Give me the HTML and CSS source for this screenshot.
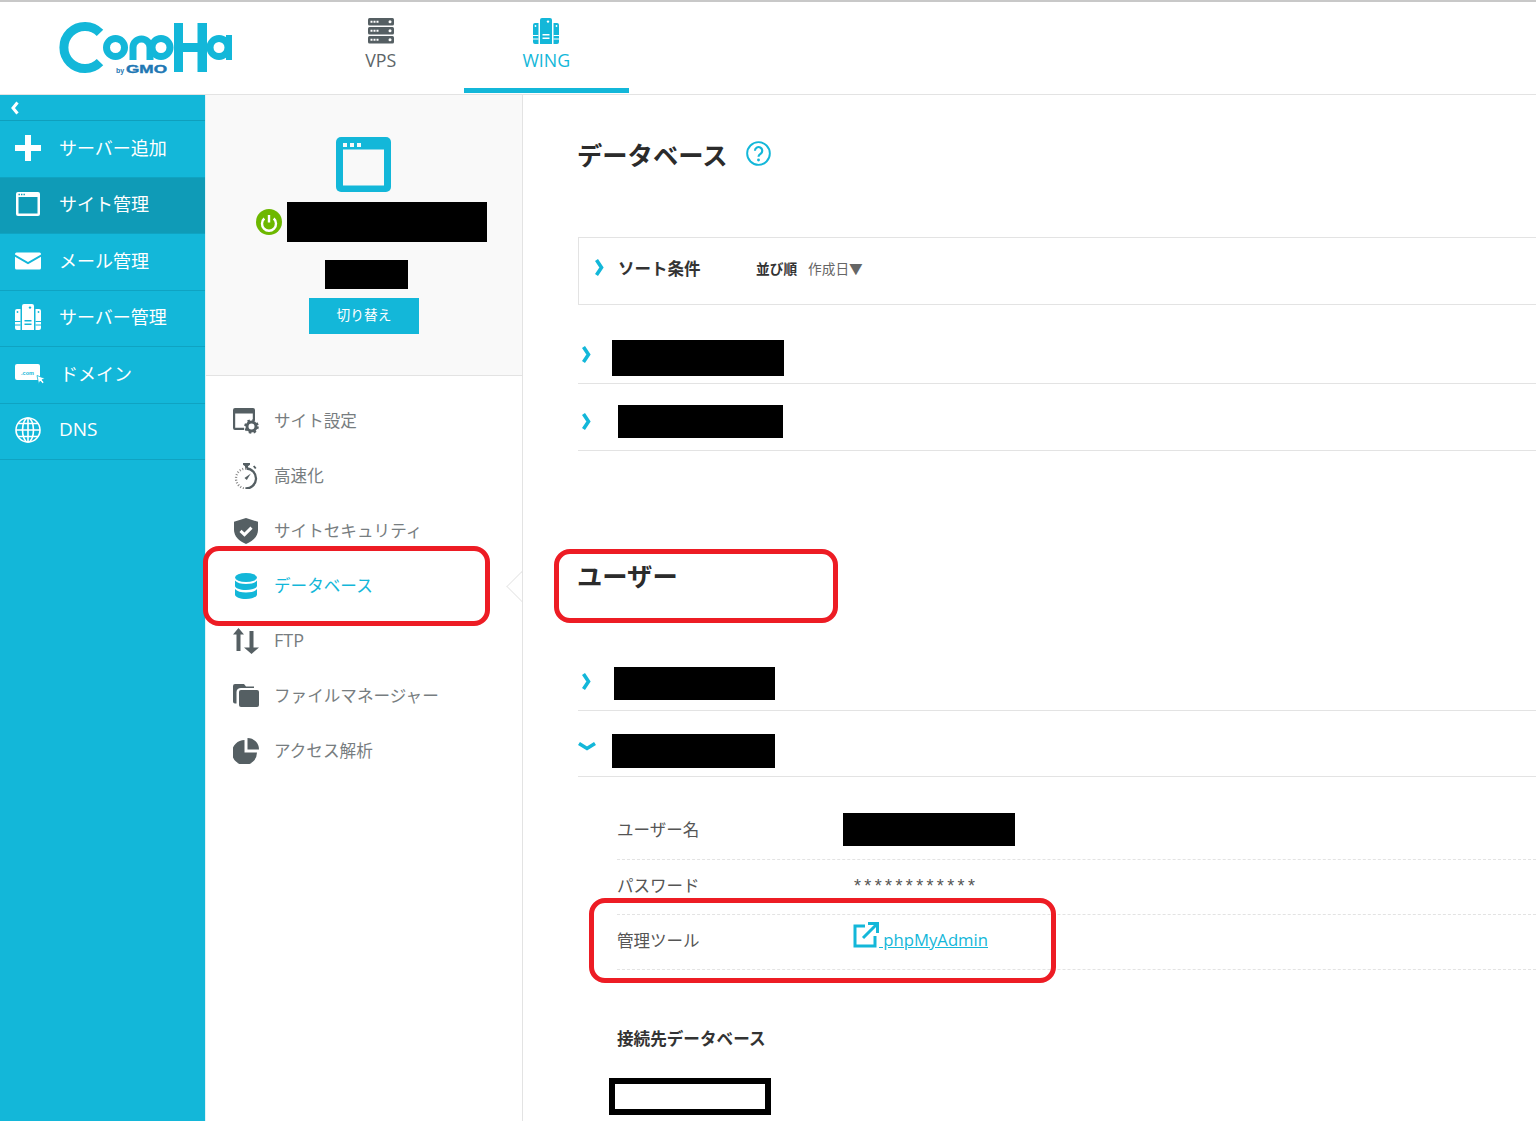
FILE: index.html
```html
<!DOCTYPE html>
<html lang="ja">
<head>
<meta charset="utf-8">
<title>ConoHa WING データベース</title>
<link rel="stylesheet" href="styles.css">
</head>
<body>
<svg class="defs" width="0" height="0" aria-hidden="true">
  <symbol id="i-server" viewBox="0 0 26 26">
    <path fill="currentColor" d="M7 2a2 2 0 0 1 2-2h8a2 2 0 0 1 2 2v24H7zM0 7a2 2 0 0 1 2-2h3.500v21H2a2 2 0 0 1-2-2zM20.500 5H24a2 2 0 0 1 2 2v17a2 2 0 0 1-2 2h-3.500z"/>
    <path class="knock" d="M9.500 16h7v1.500h-7zM9.500 19.500h7V21h-7zM0 17h5.500v1H0zM0 20.500h5.500v1H0zM20.500 17H26v1h-5.500zM20.500 20.500H26v1h-5.500z"/>
    <circle class="knock" cx="15" cy="3.600" r="1.200"/><circle class="knock" cx="23.500" cy="8" r=".9"/><circle class="knock" cx="2.500" cy="8" r=".9"/>
  </symbol>
  <symbol id="i-window" viewBox="0 0 55 55">
    <rect width="55" height="55" rx="5" fill="currentColor"/>
    <rect class="knock" x="7" y="12.500" width="41" height="36"/>
    <rect class="knock" x="7" y="6" width="4" height="4"/><rect class="knock" x="14" y="6" width="4" height="4"/><rect class="knock" x="21" y="6" width="4" height="4"/>
  </symbol>
  <symbol id="i-chev" viewBox="0 0 10 17">
    <path d="M2.500 1l5 7.500-5 7.500" fill="none" stroke="#13b7d9" stroke-width="3.600"/>
  </symbol>
</svg>

<div class="page">
  <header class="topbar">
    <svg class="logo" viewBox="0 0 195 75" role="img" aria-label="ConoHa by GMO">
      <g fill="none" stroke="#13b7d9">
        <path stroke-width="9" d="M50 22.900A21 21 0 1 0 50 52.100"/>
        <circle cx="65.500" cy="37.500" r="9" stroke-width="7"/>
        <path stroke-width="7" d="M83 50V37.500a8.500 8.500 0 0 1 17 0V50"/>
        <circle cx="111" cy="37.500" r="9" stroke-width="7"/>
        <circle cx="169" cy="37.500" r="9" stroke-width="7"/>
      </g>
      <path fill="#13b7d9" d="M124 13h9v20h14.500V13h9.500v49h-9.500V42H133v20h-9zM176 25h6v25h-6z"/>
      <text class="logo-by" x="66" y="63">by</text>
      <text class="logo-gmo" x="76" y="63" textLength="41" lengthAdjust="spacingAndGlyphs">GMO</text>
    </svg>
    <nav class="tabs">
      <a class="tab">
        <svg class="tab-icon" viewBox="0 0 26 26">
          <g fill="currentColor"><rect y="0" width="26" height="7.500" rx="1.500"/><rect y="9" width="26" height="7.500" rx="1.500"/><rect y="18" width="26" height="7.500" rx="1.500"/></g>
          <g class="knock">
            <path d="M2.500 2.700h2v2h-2zM5.500 2.700h2v2h-2zM8.500 2.700h2v2h-2zM2.500 11.700h2v2h-2zM5.500 11.700h2v2h-2zM8.500 11.700h2v2h-2zM2.500 20.700h2v2h-2zM5.500 20.700h2v2h-2zM8.500 20.700h2v2h-2z"/>
            <circle cx="22" cy="3.700" r="1.500"/><circle cx="22" cy="12.700" r="1.500"/><circle cx="22" cy="21.700" r="1.500"/>
          </g>
        </svg>
        <span>VPS</span>
      </a>
      <a class="tab tab-active">
        <svg class="tab-icon"><use href="#i-server"/></svg>
        <span>WING</span>
      </a>
    </nav>
  </header>

  <div class="body">
    <aside class="sidebar">
      <div class="collapse"><svg width="10" height="14" viewBox="0 0 10 14"><path d="M7.500 1.500 3 7l4.500 5.500" fill="none" stroke="#fff" stroke-width="3"/></svg></div>
      <a class="side-item">
        <svg class="side-icon" viewBox="0 0 26 26"><path fill="#fff" d="M10 0h6v10h10v6H16v10h-6V16H0v-6h10z"/></svg>
        <span>サーバー追加</span>
      </a>
      <a class="side-item side-active">
        <svg class="side-icon" viewBox="0 0 26 26"><rect x="1" y="1" width="24" height="24" rx="2" fill="#fff"/><rect x="3.500" y="6" width="19" height="16.500" fill="#0f9bb7"/><path fill="#0f9bb7" d="M3.500 2.800h1.400v1.400H3.500zM6 2.800h1.400v1.400H6zM8.500 2.800h1.400v1.400H8.500z"/></svg>
        <span>サイト管理</span>
      </a>
      <a class="side-item">
        <svg class="side-icon" viewBox="0 0 26 26"><path fill="#fff" d="M1.500 4.500h23A1.500 1.500 0 0 1 26 6v.4L13 14 0 6.400V6a1.500 1.500 0 0 1 1.500-1.500zM0 8.700l13 7.600 13-7.600V20a1.500 1.500 0 0 1-1.500 1.500h-23A1.500 1.500 0 0 1 0 20z"/></svg>
        <span>メール管理</span>
      </a>
      <a class="side-item side-cyan">
        <svg class="side-icon"><use href="#i-server"/></svg>
        <span>サーバー管理</span>
      </a>
      <a class="side-item">
        <svg class="side-icon side-icon-wide" viewBox="0 0 30 20">
          <rect y="0" width="25" height="16" rx="2" fill="#fff"/>
          <text class="dotcom" x="12.500" y="10.500">.com</text>
          <path fill="#fff" stroke="#13b7d9" stroke-width=".8" d="M22 11.500l8 3-3 1.300 2.200 2.500-1.700 1.300-2.200-2.500-1.700 2.600z"/>
        </svg>
        <span>ドメイン</span>
      </a>
      <a class="side-item">
        <svg class="side-icon" viewBox="0 0 26 26"><g fill="none" stroke="#fff" stroke-width="1.600"><circle cx="13" cy="13" r="12"/><ellipse cx="13" cy="13" rx="5.500" ry="12"/><path d="M13 1v24M1 13h24M3 6.500h20M3 19.500h20"/></g></svg>
        <span class="latin-side">DNS</span>
      </a>
    </aside>

    <section class="subnav">
      <div class="site-card">
        <svg class="site-icon"><use href="#i-window"/></svg>
        <div class="site-name">
          <svg class="power" viewBox="0 0 26 26"><circle cx="13" cy="13" r="13" fill="#6db800"/><path d="M8.300 9.500a7 7 0 1 0 9.400 0" fill="none" stroke="#fff" stroke-width="2.400"/><path d="M13 6v7.500" stroke="#fff" stroke-width="2.400"/></svg>
          <div class="mask mask-name"></div>
        </div>
        <div class="mask mask-plan"></div>
        <button class="switch">切り替え</button>
      </div>
      <ul class="menu">
        <li class="menu-item">
          <svg class="menu-icon" viewBox="0 0 26 26">
            <path class="dark-fill" d="M2 0h18a2 2 0 0 1 2 2v10h-2.200V5.500H2.200v14.300H11V22H2a2 2 0 0 1-2-2V2a2 2 0 0 1 2-2z"/>
            <circle class="dark-stroke" cx="18.500" cy="18.500" r="4.500" stroke-width="3" fill="none"/>
            <circle class="dark-stroke" cx="18.500" cy="18.500" r="6.300" stroke-width="2" stroke-dasharray="2.500 2.450" fill="none"/>
          </svg>
          <span>サイト設定</span>
        </li>
        <li class="menu-item">
          <svg class="menu-icon" viewBox="0 0 26 26">
            <path class="dark-fill" d="M10 0h7v1.800l-2 1.400v2h-3v-2l-2-1.400zM20 3.500l1.500-1 2 2.500-1.500 1z"/>
            <path class="dark-stroke" fill="none" stroke-width="2.300" d="M13.500 5.500a10 10 0 1 1-1 20"/>
            <path fill="none" stroke="#888" stroke-width="2.300" stroke-dasharray="1 1.800" d="M13 5.500a10 10 0 0 0 0 20"/>
            <path class="dark-fill" d="M17.800 10.500l-4 6.500-2.300-2z"/>
          </svg>
          <span>高速化</span>
        </li>
        <li class="menu-item">
          <svg class="menu-icon" viewBox="0 0 26 26">
            <path class="dark-fill" d="M13 0l12 3.800v8c0 6.500-5 11.500-12 14.200C6 23.300 1 18.300 1 11.800v-8z"/>
            <path d="M7.500 12.800l4 3.800 7-7" fill="none" stroke="#fff" stroke-width="3"/>
          </svg>
          <span>サイトセキュリティ</span>
        </li>
        <li class="menu-item menu-active">
          <svg class="menu-icon" viewBox="0 0 26 26">
            <ellipse cx="13" cy="4.500" rx="11" ry="4.500" fill="#13b7d9"/>
            <path fill="#13b7d9" d="M2 7.500c2 2.500 6 3.500 11 3.500s9-1 11-3.500v5.300c0 2.500-5 4.200-11 4.200S2 15.300 2 12.800zM2 16c2 2.500 6 3.500 11 3.500s9-1 11-3.500v5.500c0 2.500-5 4.500-11 4.500S2 24 2 21.500z"/>
          </svg>
          <span>データベース</span>
        </li>
        <li class="menu-item">
          <svg class="menu-icon" viewBox="0 0 26 26">
            <path class="dark-fill" d="M5.500 0L11 6.500H7.500V23h-4V6.500H0zM16.500 3h4v16.500H26L18.500 26 11 19.500h5.500z"/>
          </svg>
          <span class="latin-menu">FTP</span>
        </li>
        <li class="menu-item">
          <svg class="menu-icon" viewBox="0 0 26 26">
            <path class="dark-fill" d="M2 1h9l2 2.500h8V5H8C5.500 5 3.500 6.500 3.500 9v11.500H2a2 2 0 0 1-2-2V3a2 2 0 0 1 2-2z"/>
            <path class="dark-fill" d="M8 7h16a2 2 0 0 1 2 2v13a2 2 0 0 1-2 2H8a2 2 0 0 1-2-2V9a2 2 0 0 1 2-2z"/>
          </svg>
          <span>ファイルマネージャー</span>
        </li>
        <li class="menu-item">
          <svg class="menu-icon" viewBox="0 0 26 26">
            <path class="dark-fill" d="M11.500 2v12.500H24A12.500 12.500 0 1 1 11.500 2zM14.500 0A11.500 11.500 0 0 1 26 11.500H14.500z"/>
          </svg>
          <span>アクセス解析</span>
        </li>
      </ul>
    </section>

    <main class="content">
      <div class="heading">
        <h1>データベース</h1>
        <svg class="help" viewBox="0 0 26 26"><circle cx="13" cy="13" r="11.800" fill="none" stroke="#13b7d9" stroke-width="2"/><path d="M9.300 10.200a3.800 3.800 0 1 1 5.900 3.100c-1.400 1-2.200 1.500-2.200 3.200" fill="none" stroke="#13b7d9" stroke-width="2.200"/><circle cx="13" cy="19.700" r="1.500" fill="#13b7d9"/></svg>
      </div>
      <div class="sort">
        <svg class="chev"><use href="#i-chev"/></svg>
        <strong class="sort-title">ソート条件</strong>
        <strong class="sort-label">並び順</strong>
        <span class="sort-value">作成日▼</span>
      </div>

      <div class="row row-first">
        <svg class="chev"><use href="#i-chev"/></svg>
        <div class="mask mask-r1"></div>
      </div>
      <div class="row">
        <svg class="chev"><use href="#i-chev"/></svg>
        <div class="mask mask-r2"></div>
      </div>

      <h2>ユーザー</h2>

      <div class="row">
        <svg class="chev"><use href="#i-chev"/></svg>
        <div class="mask mask-r3"></div>
      </div>
      <div class="row row-open">
        <svg class="chev chev-down" viewBox="0 0 18 10"><path d="M1 1.500l8 5 8-5" fill="none" stroke="#13b7d9" stroke-width="3.600"/></svg>
        <div class="mask mask-r4"></div>
      </div>

      <dl class="detail">
        <div class="detail-row"><dt>ユーザー名</dt><dd class="dd-mask"><div class="mask mask-user"></div></dd></div>
        <div class="detail-row"><dt>パスワード</dt><dd class="stars">************</dd></div>
        <div class="detail-row"><dt>管理ツール</dt><dd>
          <a class="tool-link">
            <svg class="ext" viewBox="0 0 26 26"><path d="M12 4H2v20h20V14" fill="none" stroke="#13b7d9" stroke-width="3"/><path d="M10 16 23 3" stroke="#13b7d9" stroke-width="3"/><path d="M15 1.500h9.500V11" fill="none" stroke="#13b7d9" stroke-width="3"/></svg>
            <span> phpMyAdmin</span>
          </a>
        </dd></div>
      </dl>

      <h3>接続先データベース</h3>
      <div class="outlined"></div>
    </main>
  </div>

  <div class="note note-menu"></div>
  <div class="note note-user"></div>
  <div class="note note-tool"></div>
</div>
</body>
</html>
```

FILE: styles.css
```css
* { box-sizing: border-box; }
html, body { margin: 0; height: 100%; }
body {
  background: #fff;
  color: #333;
  font-family: "Open Sans", "Noto Sans CJK JP", sans-serif;
  overflow: hidden;
}
.defs { position: absolute; }
.knock { fill: var(--knock, #fff); }
.page { position: relative; width: 1536px; height: 1121px; overflow: hidden; }

/* top bar */
.topbar {
  height: 95px;
  display: flex;
  border-top: 2px solid #c8c8c8;
  border-bottom: 1px solid #e3e3e3;
}
.logo { width: 195px; height: 75px; margin: 8px 0 0 50px; flex: none; }
.logo-by { font: 700 7px "Liberation Sans", sans-serif; fill: #1f78b4; }
.logo-gmo { font: 700 11.500px "Liberation Sans", sans-serif; fill: #1f78b4; stroke: #1f78b4; stroke-width: .4px; }
.tabs { display: flex; margin-left: 53px; }
.tab {
  width: 165.500px;
  height: 91px;
  display: flex;
  flex-direction: column;
  align-items: center;
  padding-top: 16px;
  color: #5d6568;
  font-size: 17.800px;
  line-height: 22px;
}
.tab span { margin-top: 5px; }
.tab-icon { width: 26px; height: 26px; display: block; color: #555f63; }
.tab-active { color: #13b7d9; border-bottom: 5px solid #13b7d9; }
.tab-active .tab-icon { color: #13b7d9; }

/* columns */
.body { display: flex; height: 1026px; }
.sidebar { width: 206px; flex: none; background: #13b7d9; border-right: 1px solid #dff3f8; }
.collapse { height: 26px; padding: 6px 0 0 10px; border-bottom: 1px solid #0f9fbd; }
.collapse svg { display: block; }
.side-item {
  height: 56.500px;
  display: flex;
  align-items: center;
  padding: 0 0 2px 15px;
  border-bottom: 1px solid #0fa3c2;
  color: #fff;
  font-size: 18px;
}
.side-item span { margin-bottom: 2px; }
.latin-side { font-size: 19px; letter-spacing: -.1px; }
.side-active { background: #0f9bb7; }
.side-icon { width: 26px; height: 26px; flex: none; margin-right: 18px; }
.side-icon-wide { width: 30px; height: 20px; margin-right: 15px; }
.side-cyan .side-icon { color: #fff; --knock: #13b7d9; }
.dotcom { font: 700 5.500px "Liberation Sans", sans-serif; fill: #13b7d9; text-anchor: middle; }

.subnav { width: 317px; flex: none; border-right: 1px solid #e3e3e3; }
.site-card {
  height: 281px;
  padding-top: 42px;
  display: flex;
  flex-direction: column;
  align-items: center;
  background: #f9f9f9;
  border-bottom: 1px solid #e3e3e3;
}
.site-icon { width: 55px; height: 55px; color: #13b7d9; display: block; margin-left: -2px; --knock: #f9f9f9; }
.site-name { display: flex; align-items: center; gap: 5px; margin: 10px 0 0 14px; }
.power { width: 26px; height: 26px; margin-top: -1px; }
.mask { background: #000; flex: none; }
.mask-name { width: 200px; height: 40px; }
.mask-plan { width: 83px; height: 29px; margin: 18px 0 0 5px; }
.switch {
  width: 110px;
  height: 36px;
  margin-top: 9px;
  padding: 0 0 4px;
  border: 0;
  background: #13b7d9;
  color: #fff;
  font: 400 13.700px "Open Sans", "Noto Sans CJK JP", sans-serif;
}
.menu { position: relative; overflow: hidden; height: 600px; list-style: none; margin: 0; padding: 17px 0 0 27px; }
.menu-item {
  position: relative;
  height: 55px;
  display: flex;
  align-items: center;
  color: #777d80;
  font-size: 16.600px;
}
.menu-item span { margin-bottom: 1px; }
.latin-menu { font-size: 18px; }
.menu-icon { width: 26px; height: 26px; flex: none; margin-right: 15px; }
.dark-fill { fill: #555f63; }
.dark-stroke { stroke: #555f63; }
.menu-active { color: #13b7d9; }
.menu-active::after {
  content: "";
  position: absolute;
  right: -12px;
  top: 17px;
  width: 22px;
  height: 22px;
  background: #fff;
  border-left: 1px solid #e9e9e9;
  border-bottom: 1px solid #e9e9e9;
  transform: rotate(45deg);
}

/* main */
.content { flex: 1; min-width: 0; padding: 40px 0 0 55px; }
.heading { display: flex; align-items: center; gap: 19px; height: 40px; margin-bottom: 62px; }
h1, h2 { margin: 0 0 0 -1px; font-size: 25.300px; font-weight: 700; line-height: 40px; color: #2b2b2b; }
.help { width: 25px; height: 25px; margin: -3px 0 0 -1px; }
.sort {
  height: 68px;
  display: flex;
  align-items: center;
  margin-right: -2px;
  padding: 0 0 6px 15px;
  border: 1px solid #e3e3e3;
  font-size: 13.700px;
}
.chev { width: 10px; height: 17px; flex: none; display: block; margin-top: -1px; }
.sort-title { margin-left: 14px; width: 138px; font-size: 16.500px; color: #333; }
.sort-label { width: 52px; color: #333; }
.sort-value { color: #666; white-space: nowrap; }

.row {
  height: 67px;
  display: flex;
  align-items: center;
  padding: 8px 0 0 3px;
  border-bottom: 1px solid #e3e3e3;
}
.row-first { margin-top: 12px; }
.row-open { height: 66px; }
.row .chev { margin-top: 1px; }
.row .chev-down { width: 18px; height: 10px; margin: -1px 0 0 -3px; }
.mask-r1 { width: 172px; height: 36px; margin: 8px 0 0 21px; }
.mask-r2 { width: 165px; height: 33px; margin: 0 0 0 27px; }
.mask-r3 { width: 161px; height: 33px; margin: 4px 0 0 23px; }
.mask-r4 { width: 163px; height: 34px; margin: 6px 0 0 16px; }

h2 { margin-top: 105px; margin-bottom: 48px; }

.detail { margin: 27px 0 0 39px; }
.detail-row {
  height: 55px;
  display: flex;
  align-items: center;
  padding-bottom: 5px;
  border-bottom: 1px dashed #e3e3e3;
  font-size: 16.500px;
  color: #666;
}
.detail-row:first-child { height: 56px; }
dt { width: 226px; color: #555; }
dd { margin: 0; padding-left: 11px; }
.dd-mask { padding-left: 0; }
.mask-user { width: 172px; height: 33px; margin-top: 1px; }
.stars { font: 400 18px "Liberation Sans", sans-serif; letter-spacing: 3.350px; margin-top: 2px; line-height: 1; color: #555; }
.tool-link { display: flex; align-items: flex-end; color: #13b7d9; text-decoration: underline; font-size: 16.700px; margin-left: -1px; }
.tool-link span { white-space: pre; line-height: 22px; margin-bottom: -1px; }
.ext { width: 26px; height: 26px; flex: none; margin: -8px 0 2px 0; }

h3 { margin: 57px 0 0 39px; font-size: 16.600px; line-height: 24px; font-weight: 700; color: #333; }
.outlined { width: 162px; height: 37px; margin: 27px 0 0 31px; border: 6px solid #000; background: #fff; }

/* red annotation frames over the screenshot */
.note { position: absolute; border: 5px solid #ed1c24; border-radius: 16px; pointer-events: none; }
.note-menu { left: 203px; top: 546px; width: 287px; height: 80px; }
.note-user { left: 554px; top: 549px; width: 284px; height: 74px; }
.note-tool { left: 589px; top: 898px; width: 467px; height: 85px; }
```
